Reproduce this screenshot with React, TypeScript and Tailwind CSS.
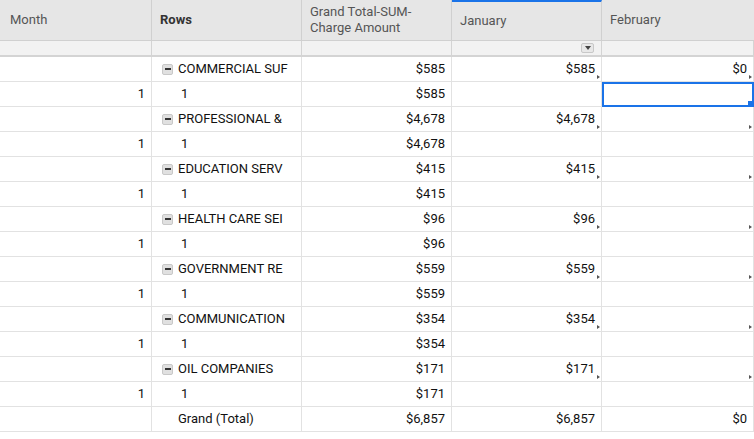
import React from "react";

const cats: [string, string][] = [
  ["COMMERCIAL SUF", "$585"],
  ["PROFESSIONAL &", "$4,678"],
  ["EDUCATION SERV", "$415"],
  ["HEALTH CARE SEI", "$96"],
  ["GOVERNMENT RE", "$559"],
  ["COMMUNICATION", "$354"],
  ["OIL COMPANIES", "$171"],
];

const Tri = () => (
  <span className="absolute right-[1px] bottom-[2px] w-0 h-0 border-t-[2px] border-b-[2px] border-l-[3px] border-t-transparent border-b-transparent border-l-[#555]" />
);

const cell = "relative border-r border-b border-[#e2e2e2] h-[25px] flex items-center px-[6px] overflow-hidden whitespace-nowrap";

export default function App() {
  const rows: React.ReactNode[] = [];
  cats.forEach(([name, v], i) => {
    rows.push(
      <React.Fragment key={"c" + i}>
        <div className={cell}></div>
        <div className={cell + " pl-[10px]"}>
          <span className="w-[11px] h-[11px] bg-[#e0e0e0] border border-[#c8c8c8] rounded-[2px] flex items-center justify-center mr-[5px] shrink-0">
            <span className="w-[6px] h-[1.5px] bg-[#333]" />
          </span>
          <span className="overflow-hidden w-[119px]">{name}</span>
        </div>
        <div className={cell + " justify-end"}>{v}</div>
        <div className={cell + " justify-end"}>{v}<Tri /></div>
        <div className={cell + " justify-end"}>{i === 0 ? "$0" : ""}<Tri /></div>
      </React.Fragment>
    );
    rows.push(
      <React.Fragment key={"r" + i}>
        <div className={cell + " justify-end"}>1</div>
        <div className={cell + " pl-[29px]"}>1</div>
        <div className={cell + " justify-end"}>{v}</div>
        <div className={cell}></div>
        <div className={cell + (i === 0 ? " !border-[2px] !border-[#1a73e8]" : "")}>
          {i === 0 && <span className="absolute right-[-1px] bottom-[-1px] w-[5px] h-[5px] bg-[#1a73e8]" />}
        </div>
      </React.Fragment>
    );
  });
  return (
    <div className="w-[754px] h-[439px] overflow-hidden bg-white text-[13px] text-[#111]" style={{ fontFamily: "Roboto, 'Liberation Sans', sans-serif" }}>
      <div className="grid grid-cols-[152px_150px_150px_150px_152px]">
        <div className="h-[41px] bg-[#e6e6e6] border-r border-b border-[#d0d0d0] px-[10px] flex items-center text-[#555]">Month</div>
        <div className="h-[41px] bg-[#e6e6e6] border-r border-b border-[#d0d0d0] px-[8px] flex items-center font-bold text-[#333]">Rows</div>
        <div className="h-[41px] bg-[#e6e6e6] border-r border-b border-[#d0d0d0] px-[8px] flex items-center text-[#555] leading-[16px]">Grand Total-SUM-<br />Charge Amount</div>
        <div className="h-[41px] bg-[#e6e6e6] border-r border-b border-[#d0d0d0] border-t-[2px] border-t-[#1a73e8] px-[8px] flex items-center text-[#555]">January</div>
        <div className="h-[41px] bg-[#e6e6e6] border-b border-[#d0d0d0] px-[8px] flex items-center text-[#555]">February</div>
        {[0, 1, 2, 3, 4].map((k) => (
          <div key={k} className="h-[16px] bg-[#f2f2f2] border-r border-b-2 border-[#d4d4d4] relative">
            {k === 3 && (
              <span className="absolute right-[7px] top-[2px] w-[13px] h-[10px] bg-[#e8e8e8] border border-[#c8c8c8] rounded-[2px] flex items-center justify-center">
                <span className="w-0 h-0 border-l-[3px] border-r-[3px] border-t-[4px] border-l-transparent border-r-transparent border-t-[#444]" />
              </span>
            )}
          </div>
        ))}
        {rows}
        <div className={cell}></div>
        <div className={cell + " pl-[26px]"}>Grand (Total)</div>
        <div className={cell + " justify-end"}>$6,857</div>
        <div className={cell + " justify-end"}>$6,857</div>
        <div className={cell + " justify-end"}>$0</div>
      </div>
    </div>
  );
}
